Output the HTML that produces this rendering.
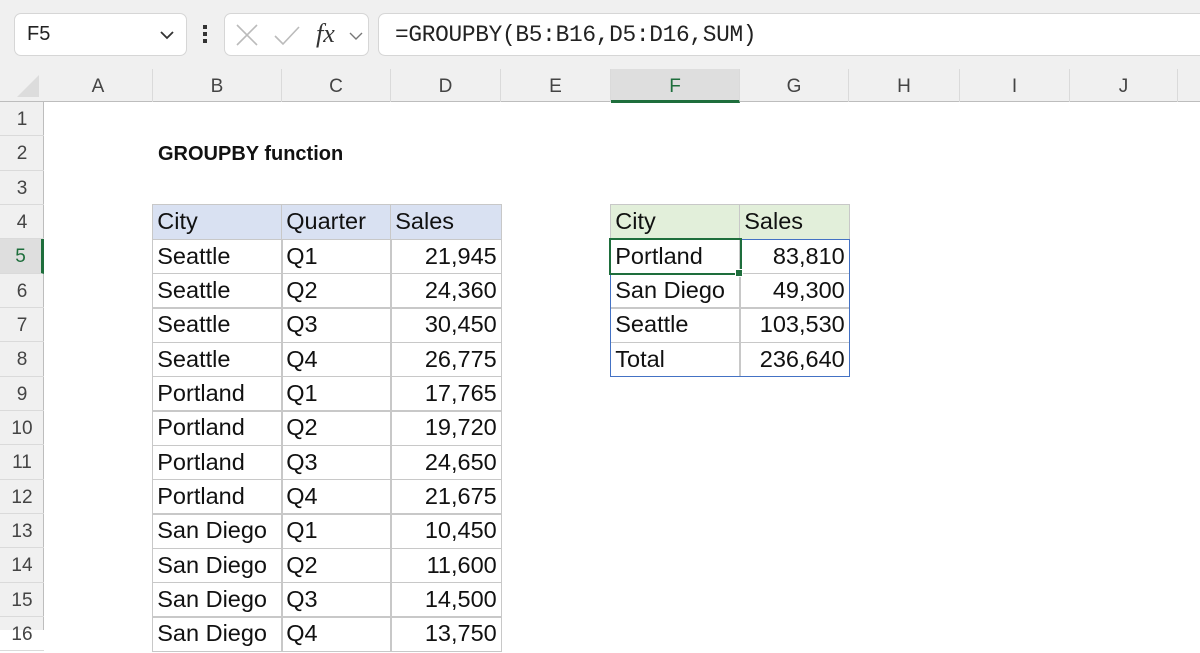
<!DOCTYPE html>
<html><head><meta charset="utf-8"><style>
*{box-sizing:border-box;margin:0;padding:0}
body{width:1200px;height:630px;overflow:hidden;background:#fff;font-family:"Liberation Sans",Arial,sans-serif;position:relative}
.top{position:absolute;left:0;top:0;width:1200px;height:69px;background:#f0f0f0}
.box{position:absolute;top:13px;height:43px;background:#fff;border:1px solid #d6d6d6;border-radius:7px}
.colh{position:absolute;top:69px;height:33px;background:#f0f0f0;border-bottom:1px solid #bdbdbd}
.ch{position:absolute;top:69px;height:33px;line-height:36px;text-align:center;font-size:19px;color:#444;border-right:1px solid #dadada}
.rowh{position:absolute;left:0;top:102px;width:44px;height:528px;background:#f0f0f0;border-right:1px solid #bdbdbd}
.rh{position:absolute;left:0;width:44px;height:34.33px;line-height:36px;text-align:center;font-size:19px;color:#444;border-bottom:1px solid #dadada}
.c{position:absolute;height:35.83px;border:1.5px solid #c8c8c8;padding:0 4px;line-height:33px;font-size:23.5px;color:#111;white-space:nowrap;overflow:hidden;margin:-0.75px 0 0 -0.75px}
.n{text-align:right}
</style></head><body>
<div class="top"></div>
<div class="box" style="left:14px;width:173px"><span style="position:absolute;left:12px;top:9px;font-size:20px;color:#222">F5</span>
<svg style="position:absolute;left:145px;top:17px" width="14" height="9"><path d="M1 1L7 7L13 1" fill="none" stroke="#333" stroke-width="1.8"/></svg></div>
<div style="position:absolute;left:203px;top:25px;width:4px;height:4px;background:#333"></div>
<div style="position:absolute;left:203px;top:32px;width:4px;height:4px;background:#333"></div>
<div style="position:absolute;left:203px;top:39px;width:4px;height:4px;background:#333"></div>
<div class="box" style="left:224px;width:145px">
<svg style="position:absolute;left:10px;top:9px" width="24" height="24"><path d="M2 2L22 22M22 2L2 22" stroke="#bbb" stroke-width="1.6"/></svg>
<svg style="position:absolute;left:48px;top:9px" width="28" height="24"><path d="M2 13L10 21L26 4" fill="none" stroke="#bbb" stroke-width="1.6"/></svg>
<span style="position:absolute;left:91px;top:5px;font-family:'Liberation Serif',serif;font-style:italic;font-size:26px;color:#333">fx</span>
<svg style="position:absolute;left:124px;top:18px" width="14" height="9"><path d="M1 1L7 7L13 1" fill="none" stroke="#777" stroke-width="1.4"/></svg></div>
<div class="box" style="left:378px;width:840px"><span style="position:absolute;left:16px;top:8px;font-family:'Liberation Mono',monospace;font-size:22.8px;color:#222;letter-spacing:-0.3px">=GROUPBY(B5:B16,D5:D16,SUM)</span></div>

<div class="colh" style="left:0;width:1200px"></div>
<svg style="position:absolute;left:17px;top:75px" width="22" height="22"><path d="M22 0L22 22L0 22Z" fill="#dcdcdc"/></svg>
<div class="ch" style="left:44px;width:109px">A</div>
<div class="ch" style="left:153px;width:129px">B</div>
<div class="ch" style="left:282px;width:109px">C</div>
<div class="ch" style="left:391px;width:110px">D</div>
<div class="ch" style="left:501px;width:110px">E</div>
<div class="ch" style="left:611px;width:129px;background:#dedede;color:#1e6e3c;border-bottom:3px solid #1e6e3c;height:34px">F</div>
<div class="ch" style="left:740px;width:109px">G</div>
<div class="ch" style="left:849px;width:111px">H</div>
<div class="ch" style="left:960px;width:110px">I</div>
<div class="ch" style="left:1070px;width:108px">J</div>

<div class="rowh"></div>
<div class="rh" style="top:102px">1</div>
<div class="rh" style="top:136.3px">2</div>
<div class="rh" style="top:170.7px">3</div>
<div class="rh" style="top:205px">4</div>
<div class="rh" style="top:239.3px;background:#dedede;color:#1e6e3c;border-right:3px solid #1e6e3c">5</div>
<div class="rh" style="top:273.7px">6</div>
<div class="rh" style="top:308px">7</div>
<div class="rh" style="top:342.3px">8</div>
<div class="rh" style="top:376.7px">9</div>
<div class="rh" style="top:411px">10</div>
<div class="rh" style="top:445.3px">11</div>
<div class="rh" style="top:479.7px">12</div>
<div class="rh" style="top:514px">13</div>
<div class="rh" style="top:548.3px">14</div>
<div class="rh" style="top:582.7px">15</div>
<div class="rh" style="top:617px">16</div>

<div style="position:absolute;left:158px;top:143px;font-size:20px;font-weight:bold;color:#111">GROUPBY function</div>

<!-- left table -->
<div class="c" style="left:153px;top:205px;width:130.5px;background:#d9e1f2">City</div>
<div class="c" style="left:282px;top:205px;width:110.5px;background:#d9e1f2">Quarter</div>
<div class="c" style="left:391px;top:205px;width:111.5px;background:#d9e1f2">Sales</div>

<div class="c" style="left:153px;top:239.33px;width:130.5px">Seattle</div><div class="c" style="left:282px;top:239.33px;width:110.5px">Q1</div><div class="c n" style="left:391px;top:239.33px;width:111.5px">21,945</div>
<div class="c" style="left:153px;top:273.67px;width:130.5px">Seattle</div><div class="c" style="left:282px;top:273.67px;width:110.5px">Q2</div><div class="c n" style="left:391px;top:273.67px;width:111.5px">24,360</div>
<div class="c" style="left:153px;top:308px;width:130.5px">Seattle</div><div class="c" style="left:282px;top:308px;width:110.5px">Q3</div><div class="c n" style="left:391px;top:308px;width:111.5px">30,450</div>
<div class="c" style="left:153px;top:342.33px;width:130.5px">Seattle</div><div class="c" style="left:282px;top:342.33px;width:110.5px">Q4</div><div class="c n" style="left:391px;top:342.33px;width:111.5px">26,775</div>
<div class="c" style="left:153px;top:376.67px;width:130.5px">Portland</div><div class="c" style="left:282px;top:376.67px;width:110.5px">Q1</div><div class="c n" style="left:391px;top:376.67px;width:111.5px">17,765</div>
<div class="c" style="left:153px;top:411px;width:130.5px">Portland</div><div class="c" style="left:282px;top:411px;width:110.5px">Q2</div><div class="c n" style="left:391px;top:411px;width:111.5px">19,720</div>
<div class="c" style="left:153px;top:445.33px;width:130.5px">Portland</div><div class="c" style="left:282px;top:445.33px;width:110.5px">Q3</div><div class="c n" style="left:391px;top:445.33px;width:111.5px">24,650</div>
<div class="c" style="left:153px;top:479.67px;width:130.5px">Portland</div><div class="c" style="left:282px;top:479.67px;width:110.5px">Q4</div><div class="c n" style="left:391px;top:479.67px;width:111.5px">21,675</div>
<div class="c" style="left:153px;top:514px;width:130.5px">San Diego</div><div class="c" style="left:282px;top:514px;width:110.5px">Q1</div><div class="c n" style="left:391px;top:514px;width:111.5px">10,450</div>
<div class="c" style="left:153px;top:548.33px;width:130.5px">San Diego</div><div class="c" style="left:282px;top:548.33px;width:110.5px">Q2</div><div class="c n" style="left:391px;top:548.33px;width:111.5px">11,600</div>
<div class="c" style="left:153px;top:582.67px;width:130.5px">San Diego</div><div class="c" style="left:282px;top:582.67px;width:110.5px">Q3</div><div class="c n" style="left:391px;top:582.67px;width:111.5px">14,500</div>
<div class="c" style="left:153px;top:617px;width:130.5px">San Diego</div><div class="c" style="left:282px;top:617px;width:110.5px">Q4</div><div class="c n" style="left:391px;top:617px;width:111.5px">13,750</div>

<!-- right table -->
<div class="c" style="left:611px;top:205px;width:130.5px;background:#e2efda">City</div>
<div class="c" style="left:740px;top:205px;width:110.5px;background:#e2efda">Sales</div>
<div class="c" style="left:611px;top:239.33px;width:130.5px">Portland</div><div class="c n" style="left:740px;top:239.33px;width:110.5px">83,810</div>
<div class="c" style="left:611px;top:273.67px;width:130.5px">San Diego</div><div class="c n" style="left:740px;top:273.67px;width:110.5px">49,300</div>
<div class="c" style="left:611px;top:308px;width:130.5px">Seattle</div><div class="c n" style="left:740px;top:308px;width:110.5px">103,530</div>
<div class="c" style="left:611px;top:342.33px;width:130.5px">Total</div><div class="c n" style="left:740px;top:342.33px;width:110.5px">236,640</div>
<div style="position:absolute;left:610px;top:238.5px;width:240px;height:138.5px;border:1.5px solid #4472c4"></div>
<div style="position:absolute;left:609px;top:238px;width:133px;height:37px;border:2.5px solid #1e6e3c"></div>
<div style="position:absolute;left:735px;top:269px;width:8px;height:8px;background:#1e6e3c;border:1px solid #fff"></div>
</body></html>
